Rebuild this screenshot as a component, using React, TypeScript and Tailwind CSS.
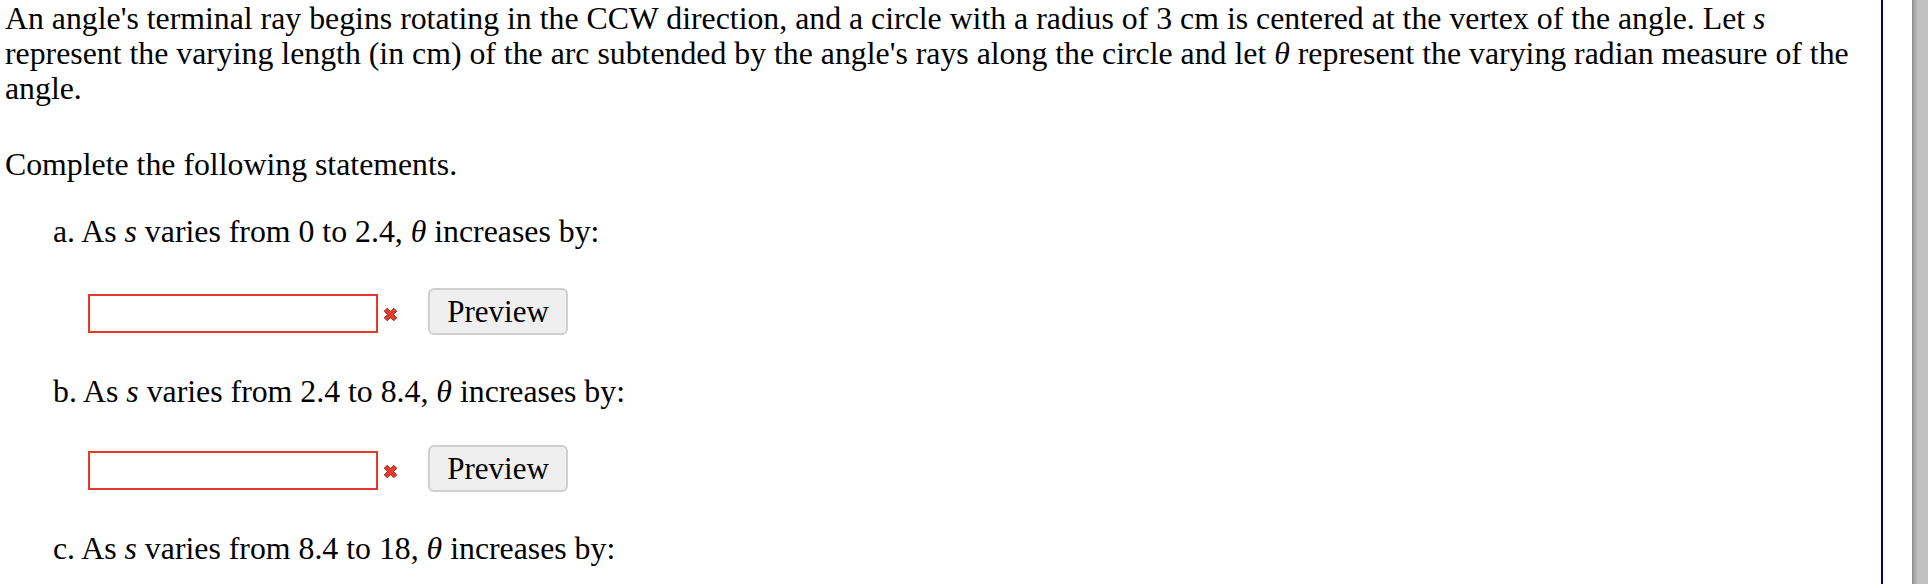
import React from "react";

const serif = { fontFamily: '"Liberation Serif", "Times New Roman", serif' };

function Cross() {
  return (
    <svg width="15" height="15" viewBox="0 0 15 15" className="block">
      <path
        d="M1.2 4.2 L4.2 1.2 L7.5 4.5 L10.8 1.2 L13.8 4.2 L10.5 7.5 L13.8 10.8 L10.8 13.8 L7.5 10.5 L4.2 13.8 L1.2 10.8 L4.5 7.5 Z"
        fill="#e8392b"
        stroke="#8f2a20"
        strokeWidth="0.9"
        strokeLinejoin="round"
      />
    </svg>
  );
}

function AnswerRow() {
  return (
    <div className="flex items-start h-[47px] pl-[88px]">
      <input
        type="text"
        className="mt-[6px] w-[290px] h-[39px] border-2 border-[#e8392b] bg-white outline-none"
      />
      <div className="mt-[19px] ml-[5px]">
        <Cross />
      </div>
      <button
        className="ml-[30px] w-[140px] h-[47px] rounded-[6px] border-2 border-[#cfcfcf] bg-[#efefef] text-[31px] leading-[43px] text-black"
        style={serif}
      >
        Preview
      </button>
    </div>
  );
}

const M = ({ children }: { children: React.ReactNode }) => <i>{children}</i>;

export default function App() {
  return (
    <div className="flex w-[1928px] h-[584px] bg-white overflow-hidden">
      <div
        className="w-[1883px] shrink-0 border-r-2 border-[#000080] text-[31.8px] leading-[35px] text-black pt-[1px] pl-[5px] whitespace-nowrap"
        style={serif}
      >
        <p>
          An angle's terminal ray begins rotating in the CCW direction, and a circle with a radius of 3 cm is
          centered at the vertex of the angle. Let <M>s</M>
          <br />
          represent the varying length (in cm) of the arc subtended by the angle's rays along the circle and let{" "}
          <M>θ</M> represent the varying radian measure of the
          <br />
          angle.
        </p>
        <p className="mt-[41px]">Complete the following statements.</p>
        <p className="mt-[32px] pl-[48px]">
          a. As <M>s</M> varies from 0 to 2.4, <M>θ</M> increases by:
        </p>
        <div className="mt-[39px] -ml-[5px]">
          <AnswerRow />
        </div>
        <p className="mt-[39px] pl-[48px]">
          b. As <M>s</M> varies from 2.4 to 8.4, <M>θ</M> increases by:
        </p>
        <div className="mt-[36px] -ml-[5px]">
          <AnswerRow />
        </div>
        <p className="mt-[39px] pl-[48px]">
          c. As <M>s</M> varies from 8.4 to 18, <M>θ</M> increases by:
        </p>
      </div>
      <div className="w-[29px] shrink-0 bg-white" />
      <div className="w-[16px] shrink-0 bg-[linear-gradient(to_right,#8e8e8e,#b5b5b5_4px,#c0c0c0_6px)]" />
    </div>
  );
}
